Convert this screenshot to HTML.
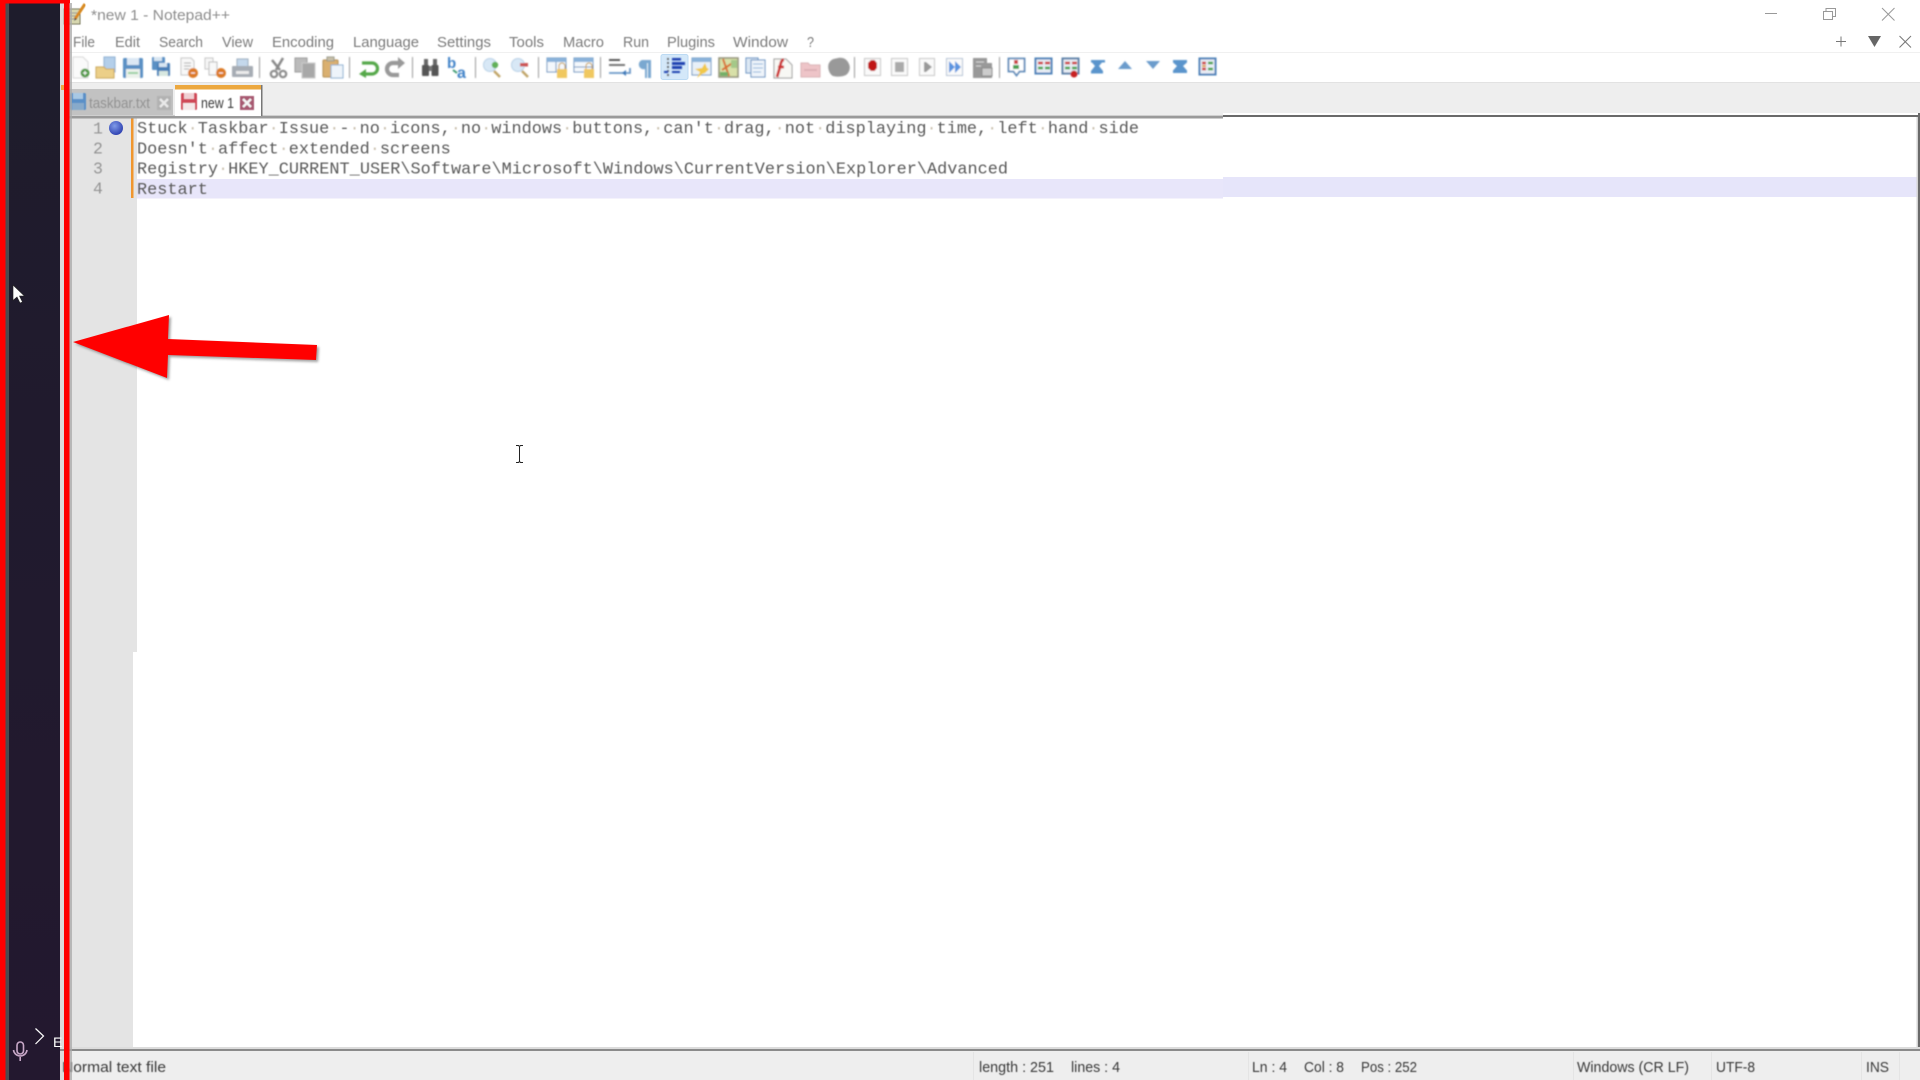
<!DOCTYPE html>
<html><head><meta charset="utf-8"><title>*new 1 - Notepad++</title>
<style>
html,body{margin:0;padding:0;background:#fff;overflow:hidden}
svg{display:block;position:absolute;left:0;top:0}
.ui{font-family:"Liberation Sans",sans-serif;font-size:15px}
.m{fill:#7c7c7c}
.s{fill:#3a3a3a}
.c{font-family:"Liberation Mono",monospace;font-size:16.87px;fill:#5a5a5a}
.d{fill:#cfc6b6}
.n{font-family:"Liberation Mono",monospace;font-size:16.5px;fill:#949494}
</style></head><body>
<svg width="1920" height="1080" viewBox="0 0 1920 1080" xmlns="http://www.w3.org/2000/svg">
<defs>
<filter id="b" x="-2%" y="-20%" width="104%" height="140%"><feGaussianBlur stdDeviation="0.75"/></filter>
<filter id="t" x="-2%" y="-20%" width="104%" height="140%"><feGaussianBlur stdDeviation="0.45"/></filter>
<filter id="sh" x="-10%" y="-20%" width="120%" height="140%"><feGaussianBlur stdDeviation="1.2"/></filter>
<linearGradient id="pn" x1="0" y1="0" x2="0" y2="1"><stop offset="0" stop-color="#1e1c2c"/><stop offset="1" stop-color="#23182f"/></linearGradient>
<radialGradient id="bm" cx=".4" cy=".35" r=".7"><stop offset="0" stop-color="#7f9be8"/><stop offset="1" stop-color="#2a3cae"/></radialGradient>
</defs>

<!-- background chrome -->
<rect width="1920" height="1080" fill="#fff"/>
<rect x="60" y="0" width="4" height="1080" fill="#dcdcdc"/>
<rect x="64" y="52" width="1856" height="1" fill="#f0f0f0"/>
<rect x="64" y="82" width="1856" height="1" fill="#e2e2e2"/>
<rect x="64" y="83" width="1856" height="33" fill="#eeeeee"/>

<!-- title / menu -->
<g filter="url(#t)">
<text class="ui" x="91" y="20" fill="#8e8e8e" textLength="139" lengthAdjust="spacingAndGlyphs">*new 1 - Notepad++</text>
<text class="ui m" x="73" y="47" textLength="22" lengthAdjust="spacingAndGlyphs">File</text>
<text class="ui m" x="115" y="47" textLength="25" lengthAdjust="spacingAndGlyphs">Edit</text>
<text class="ui m" x="159" y="47" textLength="44" lengthAdjust="spacingAndGlyphs">Search</text>
<text class="ui m" x="222" y="47" textLength="31" lengthAdjust="spacingAndGlyphs">View</text>
<text class="ui m" x="272" y="47" textLength="62" lengthAdjust="spacingAndGlyphs">Encoding</text>
<text class="ui m" x="353" y="47" textLength="66" lengthAdjust="spacingAndGlyphs">Language</text>
<text class="ui m" x="437" y="47" textLength="54" lengthAdjust="spacingAndGlyphs">Settings</text>
<text class="ui m" x="509" y="47" textLength="35" lengthAdjust="spacingAndGlyphs">Tools</text>
<text class="ui m" x="563" y="47" textLength="41" lengthAdjust="spacingAndGlyphs">Macro</text>
<text class="ui m" x="623" y="47" textLength="26" lengthAdjust="spacingAndGlyphs">Run</text>
<text class="ui m" x="667" y="47" textLength="48" lengthAdjust="spacingAndGlyphs">Plugins</text>
<text class="ui m" x="733" y="47" textLength="55" lengthAdjust="spacingAndGlyphs">Window</text>
<text class="ui m" x="807" y="47" textLength="7" lengthAdjust="spacingAndGlyphs">?</text>
</g>

<!-- notepad app icon -->
<g filter="url(#t)">
<rect x="64" y="9" width="16" height="15" fill="#d8d8b0" stroke="#6f6f50"/>
<path d="M67 13h10M67 16h10M67 19h9" stroke="#999" />
<path d="M75 19L85 4" stroke="#d88a20" stroke-width="3"/>
<path d="M74 21l1-3 2 1z" fill="#444"/>
</g>

<!-- window controls -->
<path d="M1765 13.500h12" stroke="#999" stroke-width="1"/>
<path d="M1823.500 11.500h9v8h-9zM1826 11V8.500h9.500v8h-2.500" fill="none" stroke="#999" stroke-width="1"/>
<path d="M1882 8l12.500 12.500M1894.500 8l-12.500 12.500" stroke="#999" stroke-width="1"/>
<path d="M1836 41.500h10M1841 36.500v10" stroke="#777" stroke-width="1"/>
<path d="M1868 36h13l-6.500 11z" fill="#666"/>
<path d="M1899.500 36l11.500 11.500M1911 36l-11.500 11.500" stroke="#777" stroke-width="1"/>

<!-- toolbar icons -->
<g filter="url(#b)">
<!-- new -->
<path d="M73 57h10l5 5v16H73z" fill="#fafafa" stroke="#d8d8d8"/><circle cx="85" cy="73" r="4.500" fill="#4f9a45"/><path d="M83 73h4M85 71v4" stroke="#fff"/>
<!-- open -->
<path d="M104 57h11v15h-11z" fill="#b4cfea" stroke="#8aaed2"/><path d="M96 67h8l2 2h8v9H96z" fill="#eccf88" stroke="#c8a455"/>
<!-- save -->
<rect x="123" y="58" width="20" height="20" rx="1.500" fill="#5a90c4"/><rect x="127" y="58" width="12" height="7" fill="#dce8f4"/><rect x="126" y="69" width="14" height="9" fill="#ecf2ec"/><rect x="128" y="72" width="10" height="2" fill="#98d0a0"/>
<!-- save all -->
<rect x="152" y="57" width="13" height="13" rx="1" fill="#5a90c4"/><rect x="154" y="57" width="8" height="4" fill="#d8e6f2"/><rect x="157" y="63" width="13" height="13" rx="1" fill="#4a80b8"/><rect x="159" y="71" width="9" height="5" fill="#d8e8e0"/><rect x="159" y="63" width="8" height="4" fill="#d8e6f2"/>
<!-- close -->
<path d="M181 58h10l3 3v14h-13z" fill="#f8f8f8" stroke="#c4c4c4"/><path d="M184 63h7M184 66h7M184 69h5" stroke="#aaa"/><circle cx="193" cy="73" r="5" fill="#dc7a28"/><path d="M191 73h4" stroke="#fff"/>
<!-- close all -->
<path d="M205 58h8v11h-8z" fill="#f6f6f6" stroke="#c4c4c4"/><path d="M209 62h8v13h-8z" fill="#f8f8f8" stroke="#bbb"/><circle cx="221" cy="73" r="5" fill="#dc7a28"/><path d="M219 73h4" stroke="#fff"/>
<!-- print -->
<path d="M237 59h11v8h-11z" fill="#c4d8ec" stroke="#9ab"/><path d="M233 66h19a1 1 0 0 1 1 1v9a1 1 0 0 1-1 1h-19a1 1 0 0 1-1-1v-9a1 1 0 0 1 1-1z" fill="#a6acb4"/><rect x="236" y="71" width="13" height="3" fill="#ececec"/>
<path d="M259.500 57v21" stroke="#999"/>
<!-- cut -->
<path d="M283 58l-7 12M272 60l8 10" stroke="#888" stroke-width="2.500"/><circle cx="274" cy="74" r="3.200" fill="none" stroke="#888" stroke-width="2.200"/><circle cx="283" cy="74" r="3.200" fill="none" stroke="#888" stroke-width="2.200"/>
<!-- copy -->
<rect x="295" y="58" width="12" height="14" fill="#bbb" stroke="#999"/><rect x="302" y="63" width="13" height="15" fill="#a8a8a8" stroke="#ccc"/>
<!-- paste -->
<rect x="323" y="60" width="15" height="17" rx="1" fill="#dab070" stroke="#b08a4e"/><rect x="327" y="57" width="7" height="4" fill="#c8c0a8" stroke="#998"/><rect x="331" y="65" width="12" height="13" fill="#eef4fa" stroke="#88aed2"/>
<path d="M349.500 57v21" stroke="#999"/>
<!-- undo -->
<path d="M362 63h10a5 5 0 0 1 0 11h-10" fill="none" stroke="#55a848" stroke-width="3.200"/><path d="M359 74l7-5v9z" fill="#55a848"/>
<!-- redo -->
<path d="M402 63h-9a5.500 5.500 0 0 0 0 12h6" fill="none" stroke="#999" stroke-width="4.200"/><path d="M405 63l-7-6v12z" fill="#999"/>
<path d="M412.500 57v21" stroke="#999"/>
<!-- find -->
<rect x="422" y="65" width="7" height="11" rx="1" fill="#555"/><rect x="431.500" y="65" width="7" height="11" rx="1" fill="#555"/><rect x="424" y="59" width="4" height="6" fill="#666"/><rect x="433" y="59" width="4" height="6" fill="#666"/><rect x="429" y="66" width="3" height="5" fill="#777"/>
<!-- replace -->
<text x="447" y="68" font-family="Liberation Sans,sans-serif" font-weight="700" font-size="15" fill="#3f82c8">b</text><text x="457" y="78" font-family="Liberation Sans,sans-serif" font-weight="700" font-size="16" fill="#3f82c8">a</text><path d="M453 70l4 3" stroke="#3a9a70" stroke-width="2"/>
<path d="M475.500 57v21" stroke="#999"/>
<!-- zoom in -->
<circle cx="490" cy="65" r="6.500" fill="#d8e8f6" stroke="#b8d0e6"/><path d="M494 71l6 6" stroke="#c0a468" stroke-width="2.500"/><circle cx="495" cy="65" r="3.200" fill="#62b058"/>
<!-- zoom out -->
<circle cx="518" cy="65" r="6.500" fill="#d8e8f6" stroke="#b8d0e6"/><path d="M522 71l6 6" stroke="#c0a468" stroke-width="2.500"/><rect x="520" y="63" width="8" height="3.500" fill="#cc5555"/>
<path d="M538.500 57v21" stroke="#999"/>
<!-- sync V -->
<rect x="547" y="58" width="19" height="14" fill="#f4f8fc" stroke="#6a94c0"/><rect x="547" y="58" width="19" height="4" fill="#8ab2da"/><path d="M556 62v10" stroke="#6a94c0"/><path d="M557 69h10v9h-10z" fill="#f0c860"/><path d="M559 69v-3a3 3 0 0 1 6 0v3" fill="none" stroke="#c89830"/>
<!-- sync H -->
<rect x="574" y="58" width="19" height="14" fill="#f4f8fc" stroke="#6a94c0"/><rect x="574" y="58" width="19" height="4" fill="#8ab2da"/><path d="M574 67h19" stroke="#6a94c0"/><path d="M584 69h10v9h-10z" fill="#f0c860"/><path d="M586 69v-3a3 3 0 0 1 6 0v3" fill="none" stroke="#c89830"/>
<path d="M600.500 57v21" stroke="#999"/>
<!-- wrap -->
<path d="M609 60h11" stroke="#444" stroke-width="1.800"/><path d="M609 65h16" stroke="#666" stroke-width="1.800"/><path d="M609 73h21v-5" stroke="#6a98c8" stroke-width="1.800" fill="none"/><path d="M622 73l4-3v6z" fill="#3c78b8"/>
<!-- pilcrow -->
<path d="M642 60h9v18h-3V63h-1v15h-2V69a4.500 4.500 0 0 1-3-9z" fill="#7aa8d0"/>
</g>

<rect x="661" y="54.500" width="27" height="25" rx="2" fill="#d4e8f9" stroke="#bcdaf3"/>
<g filter="url(#b)">
<!-- indent guide -->
<path d="M668 58v19" stroke="#444" stroke-dasharray="2 2" stroke-width="1.500"/>
<rect x="672" y="58" width="9" height="2.500" fill="#1a3fb0"/><rect x="672" y="62" width="13" height="3" fill="#1a3fb0"/><rect x="672" y="66" width="10" height="3" fill="#1a3fb0"/><rect x="664" y="71" width="4" height="2" fill="#1a3fb0"/><rect x="672" y="71" width="8" height="2" fill="#1a3fb0"/>
<!-- lang -->
<rect x="692" y="58" width="19" height="17" fill="#e8f0f8" stroke="#6a94c0"/><rect x="692" y="58" width="19" height="4" fill="#8ab2da"/><path d="M697 78l3-6-5-3 7-1 3-5 2 5 2 1-4 4-3 1z" fill="#f0c848"/>
<!-- map -->
<rect x="719" y="58" width="19" height="19" fill="#d8e0a8" stroke="#909078" stroke-width="1.500"/><path d="M723 59l6 17M722 70l12-8" stroke="#d87030" stroke-width="2"/><path d="M731 60h6v8h-6z" fill="#a4c888"/><path d="M720 72h8v4h-8z" fill="#74b068"/>
<!-- doc list -->
<rect x="746" y="58" width="12" height="15" fill="#dce8f4" stroke="#5a8cc0"/><rect x="751" y="60" width="14" height="17" fill="#eef4fa" stroke="#5a8cc0"/><path d="M753 64h10M753 68h10M753 72h8" stroke="#8ab2da"/>
<!-- func list -->
<path d="M774 59h12l6 6v13h-18z" fill="#f8f8f4" stroke="#999"/><path d="M784 60c-3 0-3 3-4 7l-3 10M778 67h6" stroke="#cc3030" stroke-width="2.800" fill="none"/>
<!-- folder pink -->
<path d="M801 63h7l2 2h10v12h-19z" fill="#eec4c8" stroke="#d8b0b4"/><path d="M804 70h13" stroke="#dcb0b6" stroke-width="2"/>
<!-- blob -->
<path d="M829 63c3-5 6-4 9-5 5-1 9 1 11 6 2 4 0 9-3 11-4 2-9 2-13 1-4-2-6-9-4-13z" fill="#999"/>
<path d="M854.500 57v21" stroke="#999"/>
<!-- macro -->
<rect x="864.500" y="58.500" width="16" height="17" fill="#fafafa" stroke="#c4c4c4"/><path d="M868 63l3-3h3.500l2.500 3v5l-2.500 3h-3.500l-3-3z" fill="#c01818"/>
<rect x="891.500" y="58.500" width="16" height="17" fill="#fafafa" stroke="#c4c4c4"/><rect x="895" y="62" width="9" height="10" fill="#aaaaaa"/>
<rect x="919.500" y="58.500" width="15" height="17" fill="#fafafa" stroke="#c4c4c4"/><path d="M926 62l6 5-6 5z" fill="#999"/><rect x="924" y="62" width="2" height="10" fill="#999"/>
<rect x="946.500" y="58.500" width="16" height="17" fill="#fafafa" stroke="#b4c2d4"/><path d="M949 61l6 6-6 6zM955 61l6 6-6 6z" fill="#5a94e0"/>
<path d="M973 58h14v5h5v15h-19z" fill="#999"/><path d="M982 68h10v8h-10z" fill="#ccc" stroke="#888"/><path d="M976 62h8M976 66h5" stroke="#ddd"/>
<path d="M999.500 57v21" stroke="#999"/>
<!-- bookmarks -->
<path d="M1008.500 58.500h16v13h-5l-3 4-3-4h-5z" fill="#fff" stroke="#5a88b8" stroke-width="1.800"/><path d="M1014 60h4v4h-4z" fill="#cc4040"/><path d="M1013 65h6v4h-6z" fill="#4aa050"/>
<rect x="1035.500" y="58.500" width="16" height="15" fill="#e8eef6" stroke="#4a80b8" stroke-width="2"/><path d="M1038 63h5M1045 63h5" stroke="#cc3030" stroke-width="2.500"/><path d="M1038 68h5M1045 68h5" stroke="#3ca040" stroke-width="2.500"/>
<rect x="1062.500" y="58.500" width="16" height="15" fill="#e8eef6" stroke="#5a80a8" stroke-width="2"/><path d="M1065 63h5M1072 63h5" stroke="#cc3030" stroke-width="2.500"/><path d="M1065 68h5M1072 68h5" stroke="#3ca040" stroke-width="2.500"/><circle cx="1074" cy="74" r="3.500" fill="#c82020"/>
<path d="M1091 60h14v2.500h-3l-3 3.500 4 5v2.500H1091V71l4-5-3-3.500h-1z" fill="#5a94cc"/>
<path d="M1125 61l7 8h-14z" fill="#6c9ccc"/>
<path d="M1153 69l-7-8h14z" fill="#6c9ccc"/>
<path d="M1173 60h14v2.500l-4 3.500 4 4.500v2.500h-14v-2.500l4-4.500-4-3.500z" fill="#5a94cc"/>
<rect x="1199.500" y="58.500" width="16" height="16" fill="#e8eef6" stroke="#4a80b8" stroke-width="2"/><path d="M1202 63h4M1202 69h4" stroke="#cc3030" stroke-width="2.500"/><path d="M1208 63h5M1208 69h5" stroke="#3ca040" stroke-width="2.500"/><path d="M1202 66h4" stroke="#e0a030" stroke-width="2"/>
</g>

<!-- editor -->
<rect x="64" y="116" width="1854" height="933" fill="#fff"/>
<rect x="64" y="116" width="73" height="536" fill="#e4e4e4"/>
<rect x="64" y="652" width="69" height="397" fill="#e4e4e4"/>
<rect x="137" y="179" width="1086" height="19.500" fill="#e8e6fa"/>
<rect x="1223" y="177" width="694" height="20" fill="#e6e5fa"/>
<rect x="131" y="117" width="2.500" height="81" fill="#f0962e"/>
<rect x="64" y="115" width="1159" height="1" fill="#cfcfcf"/>
<rect x="64" y="116" width="1159" height="2.500" fill="#9a9a9a"/>
<rect x="1223" y="113" width="697" height="2" fill="#fff"/>
<rect x="1223" y="115" width="695" height="2" fill="#6a6a6a"/>
<rect x="1918" y="113" width="2" height="937" fill="#6a6a6a"/>
<rect x="1916.500" y="117" width="1.500" height="931" fill="#d4d4d4"/>

<g filter="url(#t)">
<text class="n" x="93" y="133.500">1</text>
<text class="n" x="93" y="153.500">2</text>
<text class="n" x="93" y="173.500">3</text>
<text class="n" x="93" y="193.500">4</text>
<text class="c" x="137" y="133.200" textLength="1002">Stuck<tspan class="d">·</tspan>Taskbar<tspan class="d">·</tspan>Issue<tspan class="d">·</tspan>-<tspan class="d">·</tspan>no<tspan class="d">·</tspan>icons,<tspan class="d">·</tspan>no<tspan class="d">·</tspan>windows<tspan class="d">·</tspan>buttons,<tspan class="d">·</tspan>can't<tspan class="d">·</tspan>drag,<tspan class="d">·</tspan>not<tspan class="d">·</tspan>displaying<tspan class="d">·</tspan>time,<tspan class="d">·</tspan>left<tspan class="d">·</tspan>hand<tspan class="d">·</tspan>side</text>
<text class="c" x="137" y="153.400">Doesn't<tspan class="d">·</tspan>affect<tspan class="d">·</tspan>extended<tspan class="d">·</tspan>screens</text>
<text class="c" x="137" y="173.600" textLength="871">Registry<tspan class="d">·</tspan>HKEY_CURRENT_USER\Software\Microsoft\Windows\CurrentVersion\Explorer\Advanced</text>
<text class="c" x="137" y="193.800">Restart</text>
</g>
<circle cx="116" cy="128" r="7" fill="url(#bm)"/>

<!-- tabs -->
<rect x="61" y="85" width="3" height="5" fill="#f0a840"/>
<rect x="64" y="89" width="109" height="26" fill="#c2c2c2"/>
<rect x="175" y="85" width="86" height="31" fill="#fff"/>
<rect x="175" y="85" width="86" height="4.500" fill="#eca83f"/>
<rect x="261" y="85" width="1.500" height="31" fill="#777"/>
<g filter="url(#t)">
<rect x="70" y="93" width="16" height="17" rx="1.500" fill="#5a90c8"/><rect x="73" y="93" width="10" height="6" fill="#a8c8e4"/><rect x="72" y="103" width="12" height="7" fill="#88aaca"/>
<text class="ui" x="89" y="107.800" fill="#939393" textLength="61" lengthAdjust="spacingAndGlyphs">taskbar.txt</text>
<rect x="157" y="96" width="14" height="14" fill="#b2b2b2"/><path d="M160 99l8 8M168 99l-8 8" stroke="#e8e8e8" stroke-width="2.500"/>
<rect x="181" y="93" width="16" height="17" rx="1.500" fill="#d04858"/><rect x="184" y="93" width="10" height="6" fill="#f0d0d4"/><rect x="183" y="103" width="12" height="7" fill="#f4e8e8"/>
<text class="ui" x="201" y="107.800" fill="#3a3a3a" textLength="33" lengthAdjust="spacingAndGlyphs">new 1</text>
<rect x="240" y="96" width="14" height="14" fill="#a85a72"/><path d="M243 99l8 8M251 99l-8 8" stroke="#f4f4f4" stroke-width="2.500"/>
</g>

<!-- I-beam -->
<path d="M516 445.500h2.500l1 1 1-1h2.500M519.500 447v15M516 462.500h2.500l1-1 1 1h2.500" fill="none" stroke="#222" stroke-width="1"/>

<!-- arrow -->
<polygon points="75,344 171,317 170,341 319,347 318,362 170,357 169,380" fill="#555" opacity=".55" filter="url(#sh)"/>
<polygon points="73,342 169,315 168,339 317,345 316,360 168,355 167,378" fill="#ff0000"/>

<!-- status bar -->
<rect x="64" y="1047" width="1856" height="2" fill="#dcdcdc"/>
<rect x="60" y="1049" width="1860" height="2" fill="#8a8a8a"/>
<rect x="64" y="1051" width="1856" height="29" fill="#eeeeee"/>
<g stroke="#e4e4e4"><path d="M973.500 1052v28M1248.500 1052v28M1573.500 1052v28M1711.500 1052v28M1861.500 1052v28M1899.500 1052v28"/></g>
<g filter="url(#t)">
<text class="ui s" x="62" y="1072" textLength="104" lengthAdjust="spacingAndGlyphs">Normal text file</text>
<text class="ui s" x="979" y="1072" textLength="75" lengthAdjust="spacingAndGlyphs">length : 251</text>
<text class="ui s" x="1071" y="1072" textLength="49" lengthAdjust="spacingAndGlyphs">lines : 4</text>
<text class="ui s" x="1252" y="1072" textLength="35" lengthAdjust="spacingAndGlyphs">Ln : 4</text>
<text class="ui s" x="1304" y="1072" textLength="40" lengthAdjust="spacingAndGlyphs">Col : 8</text>
<text class="ui s" x="1361" y="1072" textLength="56" lengthAdjust="spacingAndGlyphs">Pos : 252</text>
<text class="ui s" x="1577" y="1072" textLength="112" lengthAdjust="spacingAndGlyphs">Windows (CR LF)</text>
<text class="ui s" x="1716" y="1072" textLength="39" lengthAdjust="spacingAndGlyphs">UTF-8</text>
<text class="ui s" x="1866" y="1072" textLength="23" lengthAdjust="spacingAndGlyphs">INS</text>
</g>

<!-- left panel overlay -->
<rect x="0" y="0" width="60" height="1080" fill="url(#pn)"/>
<rect x="5" y="3" width="4" height="1077" fill="#4c4c50"/>
<rect x="0" y="0" width="5.500" height="1080" fill="#ff0000"/>
<rect x="0" y="0" width="70" height="3.500" fill="#ff0000"/>
<rect x="69" y="3" width="3" height="1077" fill="#a8a8a8" opacity=".75"/>
<rect x="64" y="0" width="5.500" height="1080" fill="#ff0000"/>

<!-- mouse cursor -->
<path d="M13 285v15.500l4-3.500 3 6 2.500-1-3-6h5z" fill="#fff" stroke="#222" stroke-width=".6"/>
<!-- mic -->
<g fill="none" stroke="#c8a8c8" stroke-width="1.600">
<rect x="17" y="1042" width="6.500" height="12" rx="3.200"/>
<path d="M13.500 1050a6.800 6.800 0 0 0 13.500 0M20.200 1057v4"/>
</g>
<!-- chevron -->
<path d="M35.500 1028.500L43.500 1036l-8 8" fill="none" stroke="#fff" stroke-width="1.200"/>
<text x="53" y="1047" font-family="Liberation Sans,sans-serif" font-size="14" fill="#fff">E</text>
</svg>
</body></html>
